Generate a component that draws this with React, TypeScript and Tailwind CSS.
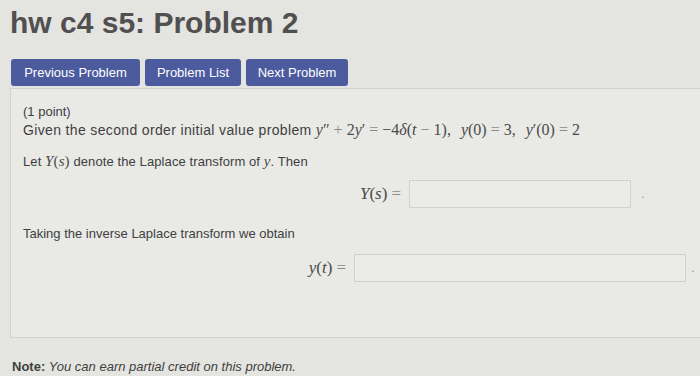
import React from 'react';

const serif = { fontFamily: '"Liberation Serif", serif' };

const M = ({ children }: { children: React.ReactNode }) => (
    <span className="italic" style={serif}>{children}</span>
);
const R = ({ children }: { children: React.ReactNode }) => (
    <span className="not-italic" style={serif}>{children}</span>
);
// binary operators / relations get MathJax-ish spacing and a lighter ink
const Op = ({ children }: { children: React.ReactNode }) => (
    <span className="not-italic mx-[4px] text-[#8a8a8a]" style={serif}>{children}</span>
);

export default function App() {
    return (
        <div className="w-[700px] h-[376px] overflow-hidden bg-[#e4e4e0] text-[#3f3f3f] font-['Liberation_Sans',Arial,sans-serif]">
            <h1 className="pl-[10px] pt-[6px] text-[30px] font-bold leading-[34px] text-[#505050]">hw c4 s5: Problem 2</h1>

            <div className="flex gap-[5px] pl-[11px] mt-[19px]">
                <button className="h-[27px] w-[129px] rounded-[3px] bg-[#4c5a9e] text-[13px] text-white">Previous Problem</button>
                <button className="h-[27px] w-[96px] rounded-[3px] bg-[#4c5a9e] text-[13px] text-white">Problem List</button>
                <button className="h-[27px] w-[102px] rounded-[3px] bg-[#4c5a9e] text-[13px] text-white">Next Problem</button>
            </div>

            <div className="mt-[2px] ml-[10px] h-[250px] border-t border-l border-b border-[#d2d2ce] bg-[#e9e9e6] pl-[12px] pt-[14px] text-[13px]">
                <p className="leading-[17px]">(1 point)</p>
                <p className="leading-[20px] text-[14px] tracking-[0.35px]">
                    Given the second order initial value problem{' '}
                    <span className="text-[16px] tracking-normal text-[#4a4a4a]">
                        <M>y</M><R>″</R><Op>+</Op><R>2</R><M>y</M><R>′</R><Op>=</Op><R>−4</R><M>δ</M><R>(</R><M>t</M><Op>−</Op><R>1),</R>
                        <span className="inline-block w-[10px]" />
                        <M>y</M><R>(0)</R><Op>=</Op><R>3,</R>
                        <span className="inline-block w-[10px]" />
                        <M>y</M><R>′(0)</R><Op>=</Op><R>2</R>
                    </span>
                </p>
                <p className="mt-[11px] leading-[20px] text-[13px] tracking-[0.1px]">
                    Let <span className="text-[15px] text-[#4a4a4a]"><M>Y</M><R>(</R><M>s</M><R>)</R></span> denote the Laplace transform of <span className="text-[15px] text-[#4a4a4a]"><M>y</M></span>. Then
                </p>
                <div className="mt-[8px] flex items-center h-[28px]">
                    <span className="w-[382px] text-right text-[17px] text-[#4a4a4a]"><M>Y</M><R>(</R><M>s</M><R>)</R><Op>=</Op></span>
                    <div className="ml-[4px] h-[28px] w-[222px] border border-[#d0d0cc] bg-[#ebebe8]" />
                    <span className="ml-[10px] text-[#999]">.</span>
                </div>
                <p className="mt-[16px] leading-[20px]">Taking the inverse Laplace transform we obtain</p>
                <div className="mt-[10px] flex items-center h-[28px]">
                    <span className="w-[327px] text-right text-[17px] text-[#4a4a4a]"><M>y</M><R>(</R><M>t</M><R>)</R><Op>=</Op></span>
                    <div className="ml-[4px] h-[28px] w-[332px] border border-[#d0d0cc] bg-[#ebebe8]" />
                    <span className="ml-[5px] text-[#999]">.</span>
                </div>
            </div>

            <p className="pl-[12px] pt-[21px] text-[13px] leading-[16px]">
                <span className="font-bold">Note:</span> <em>You can earn partial credit on this problem.</em>
            </p>
        </div>
    );
}
